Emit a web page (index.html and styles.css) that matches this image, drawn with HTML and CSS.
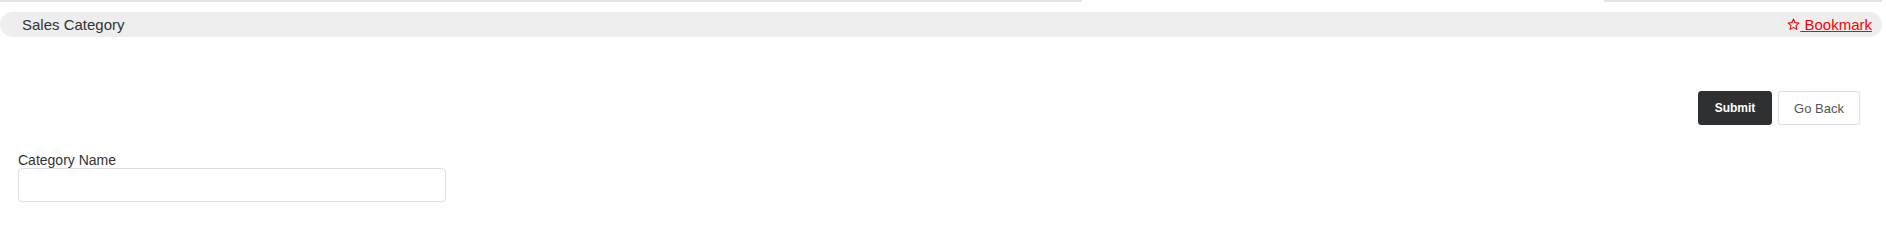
FILE: index.html
```html
<!DOCTYPE html>
<html lang="en">
<head>
    <meta charset="UTF-8">
    <meta name="viewport" content="width=device-width, initial-scale=1.0">
    <title>Sales Category</title>
    <link rel="stylesheet" href="styles.css">
</head>
<body>
    <div class="top-lines">
        <span class="line line-left"></span>
        <span class="line line-right"></span>
    </div>

    <div class="page-header">
        <span class="page-title">Sales Category</span>
        <a href="#" class="bookmark">
            <svg class="star" width="13" height="13" viewBox="0 0 24 24">
                <polygon points="12,2 14.9,8.6 22,9.3 16.6,14 18.2,21 12,17.3 5.8,21 7.4,14 2,9.3 9.1,8.6" fill="none" stroke="#ff0000" stroke-width="2" stroke-linejoin="round"/>
            </svg> Bookmark</a>
    </div>

    <div class="actions">
        <button class="btn btn-dark">Submit</button>
        <button class="btn btn-light">Go Back</button>
    </div>

    <div class="form-group">
        <label for="categoryName">Category Name</label>
        <input type="text" id="categoryName">
    </div>
</body>
</html>
```

FILE: styles.css
```css
body {
    margin: 0;
    font-family: "Liberation Sans", Arial, sans-serif;
    color: #333;
    background-color: #fff;
}
.top-lines {
    display: flex;
    height: 2px;
}
.line {
    display: block;
    height: 2px;
    background-color: #e4e4e4;
}
.line-left {
    width: 1082px;
}
.line-right {
    width: 278px;
    margin-left: 522px;
}
.page-header {
    display: flex;
    justify-content: space-between;
    align-items: center;
    width: 1882px;
    height: 25px;
    margin-top: 10px;
    padding: 0 10px 0 22px;
    box-sizing: border-box;
    background-color: #eeeeee;
    border-radius: 13px;
}
.page-title {
    font-size: 15px;
    color: #333;
}
.bookmark {
    font-size: 15px;
    color: #ff0000;
    text-decoration: underline;
}
.star {
    vertical-align: -1px;
}
.actions {
    display: flex;
    justify-content: flex-end;
    gap: 6px;
    margin-top: 54px;
    padding-right: 26px;
}
.btn {
    height: 34px;
    border-radius: 3px;
    font-family: "Liberation Sans", Arial, sans-serif;
    cursor: pointer;
}
.btn-dark {
    width: 74px;
    background-color: #2f3031;
    border: 1px solid #2f3031;
    color: #fff;
    font-size: 12px;
    font-weight: bold;
}
.btn-light {
    width: 82px;
    background-color: #fff;
    border: 1px solid #dcdfe6;
    color: #555;
    font-size: 13px;
}
.form-group {
    margin-top: 28px;
    padding-left: 18px;
}
label {
    display: block;
    font-size: 14px;
    line-height: 15px;
    color: #333;
}
input[type="text"] {
    display: block;
    width: 428px;
    height: 34px;
    margin-top: 0;
    padding: 0 10px;
    box-sizing: border-box;
    border: 1px solid #dcdfe6;
    border-radius: 4px;
}
```
